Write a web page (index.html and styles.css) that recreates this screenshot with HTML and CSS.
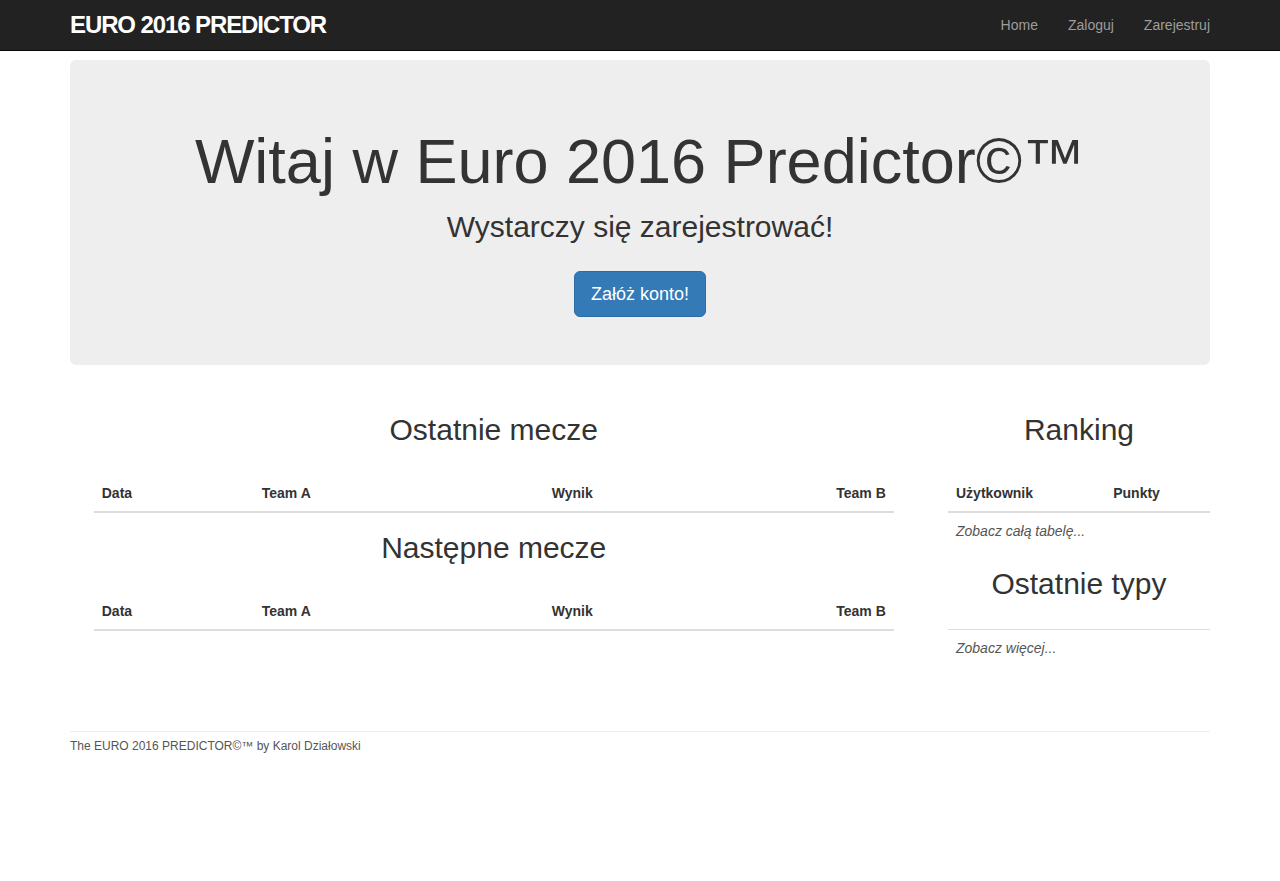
FILE: index.html
```html
<!DOCTYPE html>
<html>
<head>
<meta charset="utf-8">
<title>EURO 2016 PREDICTOR</title>
<link rel="stylesheet" href="styles.css">
</head>
<body>

<nav class="navbar">
  <div class="container navbar-inner">
    <a class="navbar-brand" href="#">EURO 2016 PREDICTOR</a>
    <ul class="navbar-nav">
      <li><a href="#">Home</a></li>
      <li><a href="#">Zaloguj</a></li>
      <li><a href="#">Zarejestruj</a></li>
    </ul>
  </div>
</nav>

<div class="container">
  <div class="jumbotron">
    <h1>Witaj w Euro 2016 Predictor©™</h1>
    <p class="lead">Wystarczy się zarejestrować!</p>
    <a class="btn btn-primary" href="#">Załóż konto!</a>
  </div>

  <div class="row">
    <div class="col-main">
      <h2 class="section-title">Ostatnie mecze</h2>
      <table class="table table-matches">
        <thead>
          <tr>
            <th class="col-date">Data</th>
            <th class="col-team-a">Team A</th>
            <th class="col-score">Wynik</th>
            <th class="col-team-b">Team B</th>
          </tr>
        </thead>
      </table>

      <h2 class="section-title">Następne mecze</h2>
      <table class="table table-matches">
        <thead>
          <tr>
            <th class="col-date">Data</th>
            <th class="col-team-a">Team A</th>
            <th class="col-score">Wynik</th>
            <th class="col-team-b">Team B</th>
          </tr>
        </thead>
      </table>
    </div>

    <div class="col-side">
      <h2 class="section-title">Ranking</h2>
      <table class="table table-ranking">
        <thead>
          <tr>
            <th class="col-user">Użytkownik</th>
            <th>Punkty</th>
          </tr>
        </thead>
        <tbody>
          <tr><td colspan="2"><a class="more" href="#">Zobacz całą tabelę...</a></td></tr>
        </tbody>
      </table>

      <h2 class="section-title">Ostatnie typy</h2>
      <table class="table">
        <tbody>
          <tr><td><a class="more" href="#">Zobacz więcej...</a></td></tr>
        </tbody>
      </table>
    </div>
  </div>

  <footer class="footer">The EURO 2016 PREDICTOR©™ by Karol Działowski</footer>
</div>

</body>
</html>
```

FILE: styles.css
```css
body {
    margin: 0;
    font-family: "Liberation Sans", Arial, sans-serif;
    font-size: 14px;
    line-height: 20px;
    color: #333;
    background: #fff;
}

a {
    text-decoration: none;
}

.container {
    width: 1140px;
    margin: 0 auto;
}

/* navbar */
.navbar {
    background: #222;
    border-bottom: 1px solid #080808;
    height: 50px;
    margin-bottom: 9px;
}
.navbar-inner {
    display: flex;
    justify-content: space-between;
    align-items: center;
    height: 50px;
}
.navbar-brand {
    color: #fff;
    font-size: 24px;
    font-weight: bold;
    letter-spacing: -1.1px;
    line-height: 50px;
}
.navbar-nav {
    display: flex;
    list-style: none;
    margin: 0 -15px 0 0;
    padding: 0;
}
.navbar-nav a {
    display: block;
    padding: 15px;
    color: #9d9d9d;
    line-height: 20px;
}

/* jumbotron */
.jumbotron {
    background: #eee;
    border-radius: 6px;
    padding: 48px 60px 48px;
    margin-bottom: 30px;
    text-align: center;
}
.jumbotron h1 {
    font-size: 63px;
    font-weight: normal;
    line-height: 1.1;
    margin: 19px 0 14px;
}
.jumbotron .lead {
    font-size: 30px;
    line-height: 33px;
    margin: 0 0 28px;
}

.btn {
    display: inline-block;
    padding: 10px 16px;
    font-size: 18px;
    line-height: 24px;
    border-radius: 6px;
    border: 1px solid transparent;
}
.btn-primary {
    color: #fff;
    background: #337ab7;
    border-color: #2e6da4;
}

/* columns */
.row {
    display: flex;
}
.col-main {
    flex: 0 0 847.5px;
}
.col-side {
    flex: 0 0 262px;
    margin-left: 30.5px;
}

.section-title {
    font-size: 30px;
    font-weight: normal;
    line-height: 33px;
    text-align: center;
    margin: 18px 0 29px;
}

/* tables */
.table {
    width: 100%;
    border-collapse: collapse;
    margin-bottom: 18px;
}
.table th {
    text-align: left;
    padding: 8px;
    border-bottom: 2px solid #ddd;
    vertical-align: bottom;
}
.table td {
    padding: 8px;
    border-top: 1px solid #ddd;
}

.table-matches {
    width: 800px;
    margin-left: auto;
    margin-right: auto;
    table-layout: fixed;
}
.col-date { width: 144px; }
.col-team-a { width: 274px; }
.col-score { width: 224px; }
.table-matches .col-team-b { text-align: right; }

.col-user { width: 60%; }

.more {
    color: #555;
    font-style: italic;
}

/* footer */
.footer {
    margin-top: 47px;
    border-top: 1px solid #eee;
    padding-top: 6px;
    font-size: 12px;
    line-height: 17px;
    color: #555;
}
```
